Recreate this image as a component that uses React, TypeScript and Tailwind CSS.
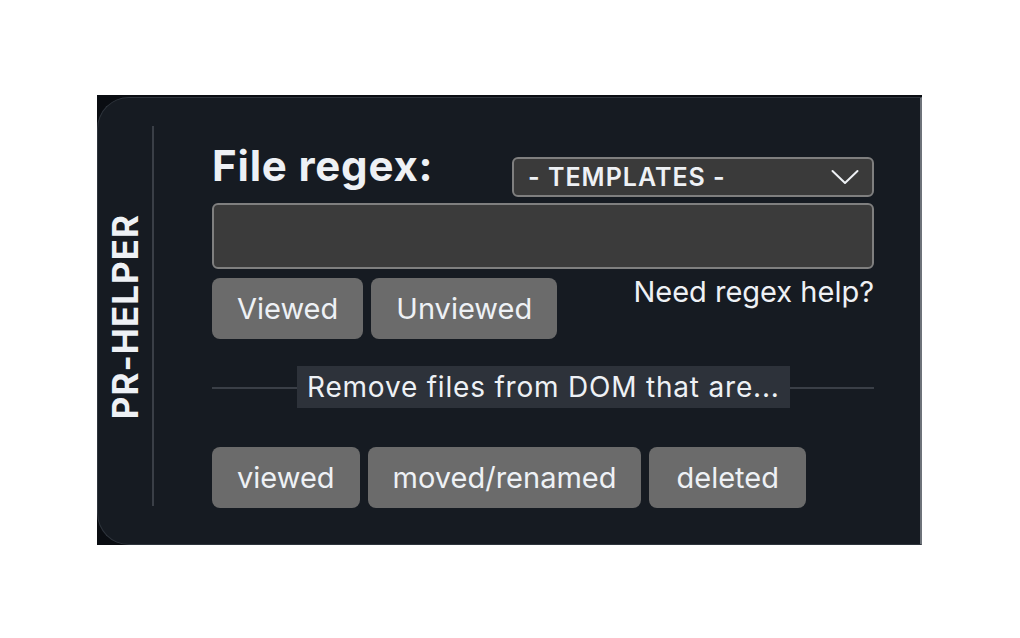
const btn =
  "h-[61px] px-[25px] rounded-[8px] bg-[#6b6b6b] text-[#eef1f5] text-[29px] leading-none flex items-center"

export default function App() {
  return (
    <div className="min-h-screen bg-white pt-[95px] pl-[97px] font-['Inter','Noto_Sans',sans-serif]">
      {/* outer frame */}
      <div className="w-[825px] h-[450px] bg-[#0a0d12] pt-[2px] flex">
        <div className="flex-1 flex rounded-l-[32px] border border-r-2 border-[#2e343c] border-r-[#6e737a] bg-[#161b22]">
          {/* side tab */}
          <div className="w-[54px] flex items-center justify-center pb-[8px]">
            <span className="[writing-mode:vertical-rl] rotate-180 text-[35px] font-bold tracking-[1px] text-[#eef1f5] leading-none">
              PR-HELPER
            </span>
          </div>
          <div className="w-[2px] mt-[28px] mb-[38px] bg-[#3a3f47]" />

          {/* content */}
          <div className="pl-[58px] pt-[47px] w-[720px]">
            <div className="flex items-start justify-between">
              <h1 className="text-[42px] font-bold tracking-[0.8px] leading-none text-[#eef1f5]">File regex:</h1>
              <button className="mt-[12px] w-[362px] h-[40px] rounded-[6px] border-2 border-[#7f7f7f] bg-[#3a3a3a] flex items-center justify-between pl-[14px] pr-[12px]">
                <span className="text-[25px] font-semibold tracking-[1px] text-[#eef1f5] leading-none">- TEMPLATES -</span>
                <svg width="28" height="16" viewBox="0 0 28 16" fill="none" className="mr-[1px]">
                  <polyline points="1.5,2 14,14 26.5,2" stroke="#eef1f5" strokeWidth="2" strokeLinecap="round" strokeLinejoin="round" />
                </svg>
              </button>
            </div>

            <div className="mt-[6px] h-[66px] rounded-[6px] border-2 border-[#7f7f7f] bg-[#3b3b3b]" />

            <div className="mt-[9px] flex justify-between items-start">
              <div className="flex gap-[8px]">
                <button className={btn}>Viewed</button>
                <button className={btn}>Unviewed</button>
              </div>
              <a className="-mt-[1px] text-[29px] leading-none text-[#eef1f5]">Need regex help?</a>
            </div>

            {/* divider */}
            <div className="mt-[27px] h-[42px] flex items-center">
              <div className="w-[85px] h-[2px] mt-[2px] bg-[#3a3f47]" />
              <div className="h-[42px] px-[10px] bg-[#2d323a] flex items-center text-[28px] tracking-[0.8px] leading-none text-[#eef1f5]">
                Remove files from DOM that are...
              </div>
              <div className="flex-1 h-[2px] mt-[2px] bg-[#3a3f47]" />
            </div>

            <div className="mt-[39px] flex gap-[8px]">
              <button className={btn}>viewed</button>
              <button className={btn}>moved/renamed</button>
              <button className={btn + " px-[27px]"}>deleted</button>
            </div>
          </div>
        </div>
      </div>
    </div>
  )
}
